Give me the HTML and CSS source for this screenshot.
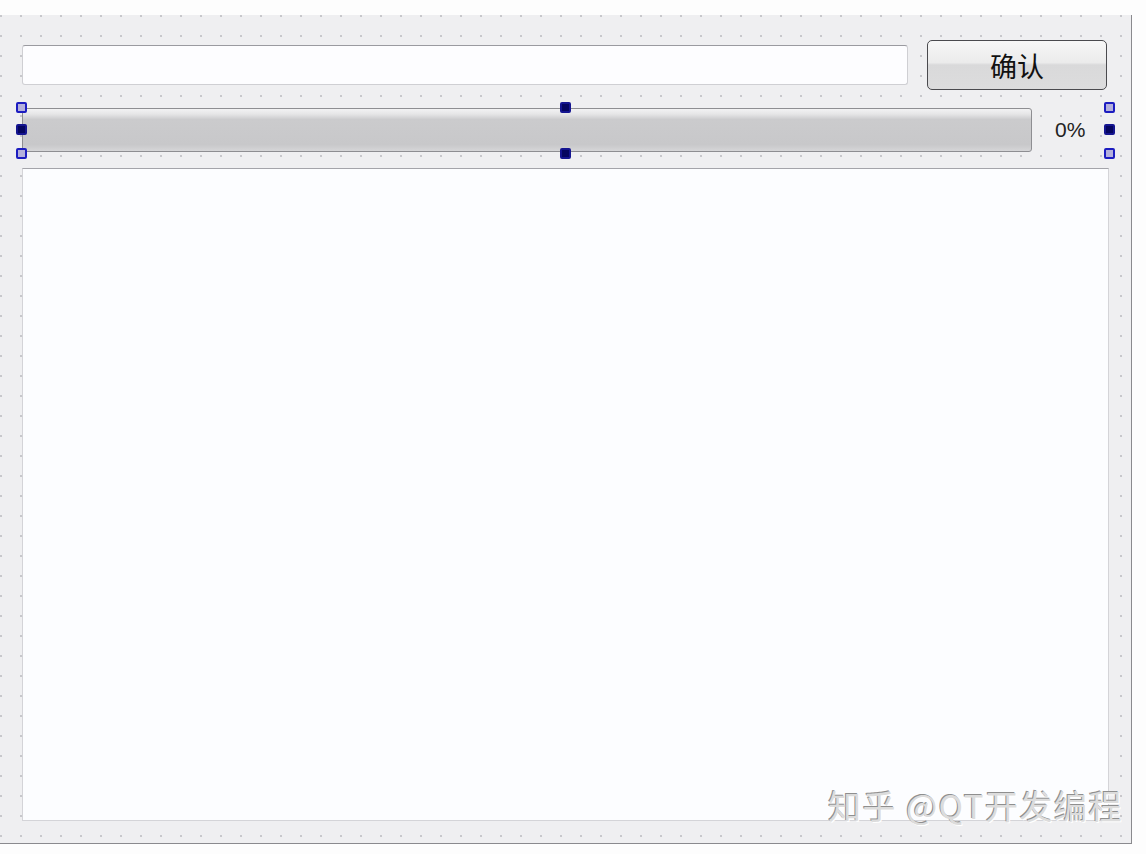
FILE: index.html
```html
<!DOCTYPE html>
<html lang="zh">
<head>
  <meta charset="UTF-8" />
  <title>Form</title>
  <link rel="stylesheet" href="styles.css">
</head>
<body>
  <div class="form">
    <div class="top-row">
      <input type="text" class="line-edit">
      <button class="confirm-btn">确认</button>
    </div>

    <div class="progress-row">
      <div class="progress-bar"></div>
      <span class="progress-label">0%</span>

      <!-- selection handles -->
      <span class="handle light" style="left:16px;top:-6px"></span>
      <span class="handle dark" style="left:16px;top:16px"></span>
      <span class="handle light" style="left:16px;top:40px"></span>
      <span class="handle dark" style="left:560px;top:-6px"></span>
      <span class="handle dark" style="left:560px;top:40px"></span>
      <span class="handle light" style="left:1104px;top:-6px"></span>
      <span class="handle dark" style="left:1104px;top:16px"></span>
      <span class="handle light" style="left:1104px;top:40px"></span>
    </div>

    <div class="text-area"></div>

    <div class="watermark">知乎 @QT开发编程</div>
  </div>
</body>
</html>
```

FILE: styles.css
```css
body {
  margin: 0;
  background-color: #fdfdfd;
  font-family: "Liberation Sans", "Noto Sans CJK SC", sans-serif;
}

.form {
  position: relative;
  margin-top: 15px;
  width: 1132px;
  height: 829px;
  box-sizing: border-box;
  padding: 25px 0 0 22px;
  background-color: #efeff1;
  background-image: radial-gradient(circle, #c6c6ca 0.7px, transparent 1.1px);
  background-size: 20px 20px;
  background-position: 11px -9px;
  border-right: 1px solid #8a8a8e;
  border-bottom: 1px solid #8a8a8e;
}

.top-row {
  display: flex;
  align-items: center;
  gap: 19px;
  height: 50px;
}

.line-edit {
  width: 886px;
  height: 40px;
  box-sizing: border-box;
  margin: 0;
  border: 1px solid #cfcfd3;
  border-top-color: #9a9aa0;
  border-radius: 3px;
  background-color: #fdfdff;
}

.confirm-btn {
  width: 180px;
  height: 50px;
  box-sizing: border-box;
  border: 1px solid #4a4a4e;
  border-radius: 5px;
  background: linear-gradient(#f7f7f7 0%, #ebebeb 45%, #d9d9da 50%, #dcdcdd 100%);
  font-family: "Noto Sans CJK SC", sans-serif;
  font-size: 27px;
  color: #111;
  padding: 0;
}

.progress-row {
  position: relative;
  display: flex;
  align-items: center;
  margin-top: 18px;
  margin-left: -22px;
  padding-left: 22px;
  height: 44px;
}

.progress-bar {
  width: 1010px;
  height: 44px;
  box-sizing: border-box;
  border: 1px solid #8e8e92;
  border-radius: 3px;
  background: linear-gradient(#f2f2f3 0%, #e6e6e7 12%, #cbcbcd 25%, #c8c8ca 85%, #d6d6d8 100%);
}

.progress-label {
  margin-left: 23px;
  font-size: 21px;
  color: #222;
}

.handle {
  position: absolute;
  width: 11px;
  height: 11px;
  box-sizing: border-box;
  border: 2px solid #1c1cc0;
  border-radius: 2px;
}

.handle.light {
  background-color: #b4b0dc;
}

.handle.dark {
  background-color: #050560;
  border-color: #141490;
}

.text-area {
  margin-top: 16px;
  width: 1087px;
  height: 653px;
  box-sizing: border-box;
  border: 1px solid #d4d4d8;
  border-top-color: #a4a4aa;
  background-color: #fcfdff;
}

.watermark {
  position: absolute;
  left: 828px;
  top: 766px;
  font-family: "Noto Sans CJK SC", sans-serif;
  font-size: 33px;
  color: #dcdcdc;
  text-shadow: -1px -1px 0 #8f8f8f, 1px 1px 0 #fff;
  letter-spacing: 1.5px;
  white-space: nowrap;
}
```
